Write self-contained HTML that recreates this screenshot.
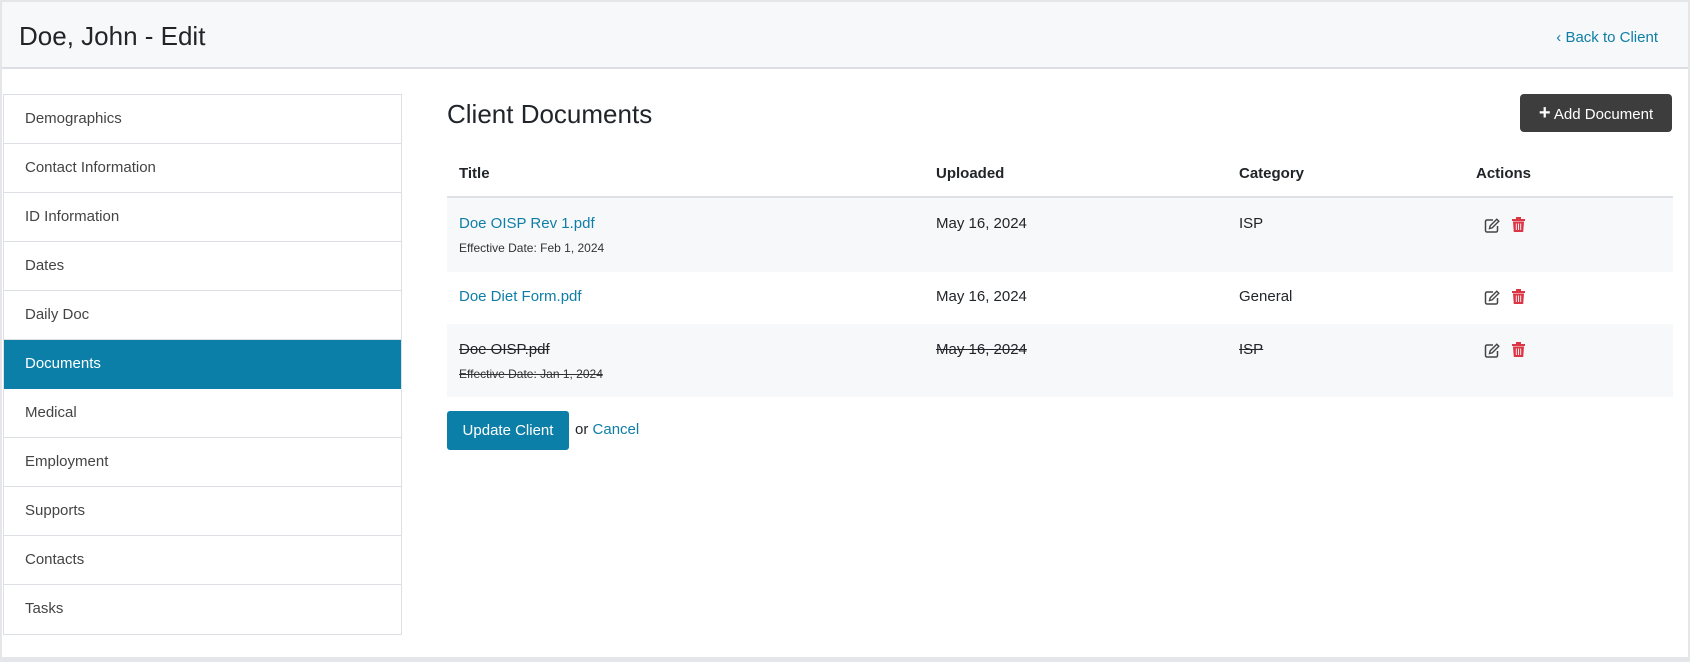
<!DOCTYPE html>
<html><head><style>
*{box-sizing:border-box;margin:0;padding:0}
body{width:1690px;height:662px;background:#e4e6e9;font-family:"Liberation Sans",sans-serif;color:#212529;position:relative;overflow:hidden}
.card{position:absolute;left:2px;top:2px;width:1686px;height:655px;background:#fff}
.hdr{position:absolute;left:0;top:0;width:1686px;height:67px;background:#f7f8fa;border-bottom:2px solid #dcdfe3}
.hdr h1{position:absolute;left:17px;top:19px;font-size:26px;font-weight:normal;color:#212529}
.back{position:absolute;right:30px;top:27px;font-size:15px;color:#0f7ea6}
.nav{position:absolute;left:1px;top:92px;width:399px;border:1px solid #dcdfe3}
.nav div{height:49px;line-height:48px;padding-left:21px;font-size:15px;color:#444;border-bottom:1px solid #dcdfe3}
.nav div:last-child{border-bottom:0}
.nav .act{background:#0b7fa7;color:#fff;border-color:#0b7fa7}
h2{position:absolute;left:445px;top:97px;font-size:26px;font-weight:normal}
.add{position:absolute;left:1518px;top:92px;width:152px;height:38px;background:#3d3d3d;color:#fff;border-radius:4px;font-size:15px;line-height:38px;text-align:center}
.th{position:absolute;top:163px;font-weight:bold;font-size:15px}
.line{position:absolute;left:445px;top:194px;width:1226px;height:2px;background:#dee2e6}
.row{position:absolute;left:445px;width:1226px}
.c{position:absolute;font-size:15px}
.lnk{color:#0f7ea6}
.sm{position:absolute;font-size:12px;color:#333}
.s{text-decoration:line-through}
.ic{position:absolute}
.btn{position:absolute;left:445px;top:409px;width:122px;height:39px;background:#0b7fa7;color:#fff;border-radius:3px;font-size:15px;line-height:39px;text-align:center}
</style></head><body>
<div class="card">
<div class="hdr"><h1>Doe, John - Edit</h1><div class="back">&#8249; Back to Client</div></div>
<div class="nav">
<div>Demographics</div><div>Contact Information</div><div>ID Information</div><div>Dates</div><div>Daily Doc</div><div class="act">Documents</div><div>Medical</div><div>Employment</div><div>Supports</div><div>Contacts</div><div>Tasks</div>
</div>
<h2>Client Documents</h2>
<div class="add"><b style="font-size:20px">+</b> Add Document</div>
<div class="th" style="left:457px">Title</div>
<div class="th" style="left:934px">Uploaded</div>
<div class="th" style="left:1237px">Category</div>
<div class="th" style="left:1474px">Actions</div>
<div class="line"></div>
<div class="row" style="top:196px;height:74px;background:#f7f8fa">
<div class="c lnk" style="left:12px;top:17px">Doe OISP Rev 1.pdf</div>
<div class="sm" style="left:12px;top:43px">Effective Date: Feb 1, 2024</div>
<div class="c" style="left:489px;top:17px">May 16, 2024</div>
<div class="c" style="left:792px;top:17px">ISP</div>
</div>
<div class="row" style="top:270px;height:52px">
<div class="c lnk" style="left:12px;top:16px">Doe Diet Form.pdf</div>
<div class="c" style="left:489px;top:16px">May 16, 2024</div>
<div class="c" style="left:792px;top:16px">General</div>
</div>
<div class="row" style="top:322px;height:73px;background:#f7f8fa">
<div class="c s" style="left:12px;top:17px">Doe OISP.pdf</div>
<div class="sm s" style="left:12px;top:43px">Effective Date: Jan 1, 2024</div>
<div class="c s" style="left:489px;top:17px">May 16, 2024</div>
<div class="c s" style="left:792px;top:17px">ISP</div>
</div>
<svg class="ic" style="left:0;top:0" width="1686" height="655">
<defs>
<g id="e"><path d="M9 2H3a1.5 1.5 0 0 0-1.5 1.5v9A1.5 1.5 0 0 0 3 14h9a1.5 1.5 0 0 0 1.5-1.5V8" stroke="#444" stroke-width="1.5" fill="none"/><path d="M12.8 1.2l2 2L8.3 9.8l-2.8.7.7-2.8z" stroke="#444" stroke-width="1.4" fill="none"/></g>
<g id="t"><rect x="0" y="2" width="13" height="2" fill="#dc3545"/><rect x="4" y="0" width="5" height="2.5" fill="#dc3545"/><path d="M1 4.5h11l-.8 10.5H1.8z" fill="#dc3545"/><path d="M4.3 6.5v6.5M6.5 6.5v6.5M8.7 6.5v6.5" stroke="#fff" stroke-width=".9"/></g>
</defs>
<use href="#e" x="1482" y="216"/><use href="#t" x="1510" y="215"/>
<use href="#e" x="1482" y="288"/><use href="#t" x="1510" y="287"/>
<use href="#e" x="1482" y="341"/><use href="#t" x="1510" y="340"/>
</svg>
<div class="btn">Update Client</div>
<div class="c" style="left:573px;top:419px">or <span class="lnk">Cancel</span></div>
</div>
</body></html>
